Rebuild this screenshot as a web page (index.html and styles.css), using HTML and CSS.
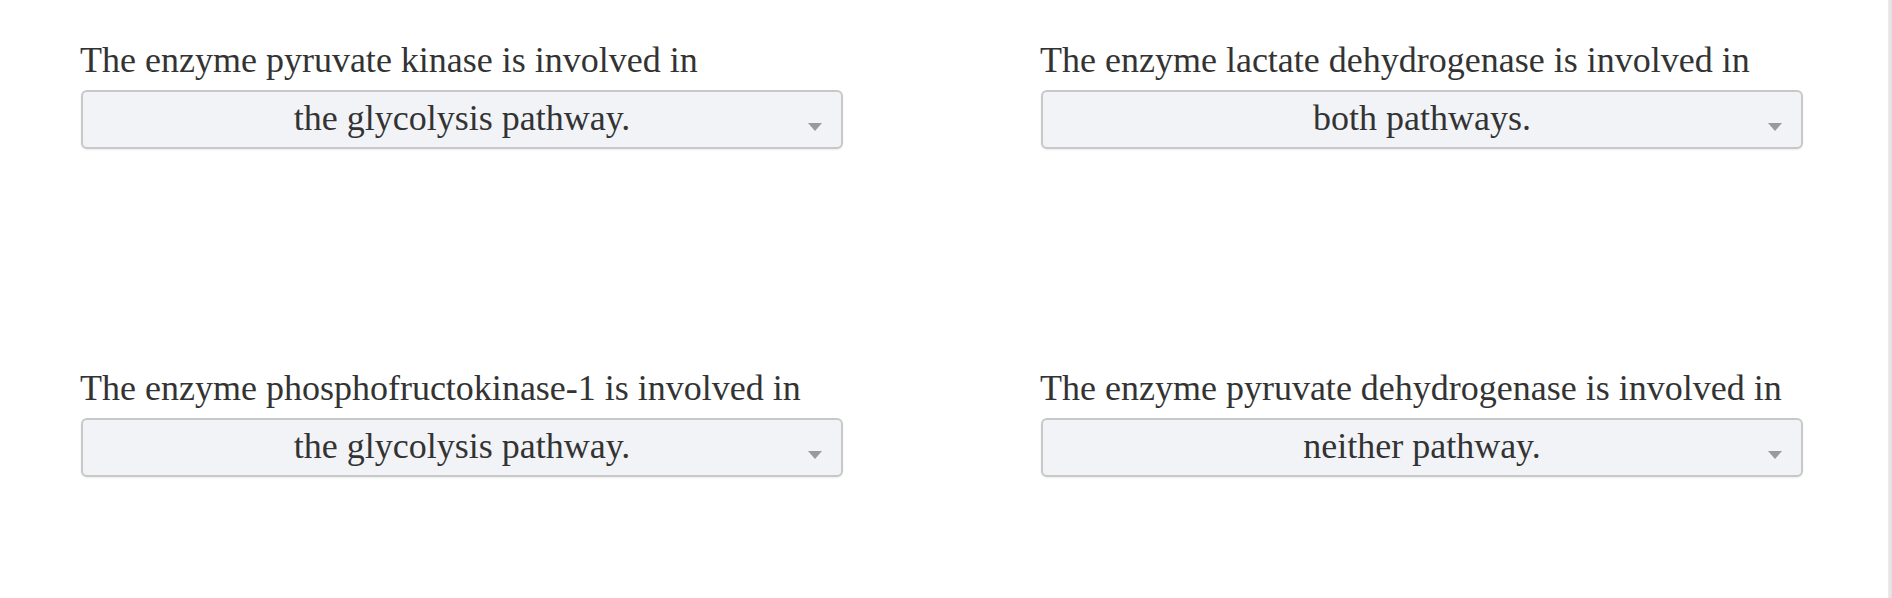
FILE: index.html
```html
<!DOCTYPE html>
<html lang="en">
<head>
    <meta charset="UTF-8">
    <title>Enzymes and pathways</title>
    <link rel="stylesheet" href="styles.css">
</head>
<body>
    <div class="page">
        <div class="questions">
            <div class="question">
                <label for="q1">The enzyme pyruvate kinase is involved in</label>
                <div class="select-wrap">
                    <select id="q1">
                        <option>the glycolysis pathway.</option>
                        <option>the gluconeogenesis pathway.</option>
                        <option>both pathways.</option>
                        <option>neither pathway.</option>
                    </select>
                </div>
            </div>
            <div class="question">
                <label for="q2">The enzyme lactate dehydrogenase is involved in</label>
                <div class="select-wrap">
                    <select id="q2">
                        <option>the glycolysis pathway.</option>
                        <option>the gluconeogenesis pathway.</option>
                        <option selected>both pathways.</option>
                        <option>neither pathway.</option>
                    </select>
                </div>
            </div>
            <div class="question">
                <label for="q3">The enzyme phosphofructokinase-1 is involved in</label>
                <div class="select-wrap">
                    <select id="q3">
                        <option>the glycolysis pathway.</option>
                        <option>the gluconeogenesis pathway.</option>
                        <option>both pathways.</option>
                        <option>neither pathway.</option>
                    </select>
                </div>
            </div>
            <div class="question">
                <label for="q4">The enzyme pyruvate dehydrogenase is involved in</label>
                <div class="select-wrap">
                    <select id="q4">
                        <option>the glycolysis pathway.</option>
                        <option>the gluconeogenesis pathway.</option>
                        <option>both pathways.</option>
                        <option selected>neither pathway.</option>
                    </select>
                </div>
            </div>
        </div>
        <div class="edge"></div>
    </div>
</body>
</html>
```

FILE: styles.css
```css
html, body {
    margin: 0;
    padding: 0;
    background: #fff;
}

body {
    font-family: "Liberation Serif", "Times New Roman", serif;
    color: #333;
}

.page {
    display: flex;
    height: 100vh;
    overflow: hidden;
}

.questions {
    flex: 1;
    display: grid;
    grid-template-columns: 762px 762px;
    column-gap: 198px;
    row-gap: 221px;
    padding: 42px 0 0 81px;
    align-content: start;
}

.question label {
    display: block;
    font-size: 36px;
    line-height: 37px;
    margin-bottom: 11px;
    margin-left: -1px;
}

.select-wrap {
    position: relative;
}

.select-wrap select {
    -webkit-appearance: none;
    appearance: none;
    width: 100%;
    height: 59px;
    margin: 0;
    padding: 0 40px 4px;
    font-family: inherit;
    font-size: 36px;
    color: #333;
    text-align: center;
    text-align-last: center;
    background: #f2f3f7;
    border: 2px solid #c8c8c8;
    border-radius: 6px;
    box-shadow: 0 1px 2px rgba(0,0,0,0.08);
}

.select-wrap::after {
    content: "";
    position: absolute;
    right: 21px;
    top: 33px;
    border-left: 7px solid transparent;
    border-right: 7px solid transparent;
    border-top: 8px solid #9a9a9a;
    pointer-events: none;
}

.edge {
    width: 4px;
    background: linear-gradient(to right, #ececec, #e0e0e0);
}
```
